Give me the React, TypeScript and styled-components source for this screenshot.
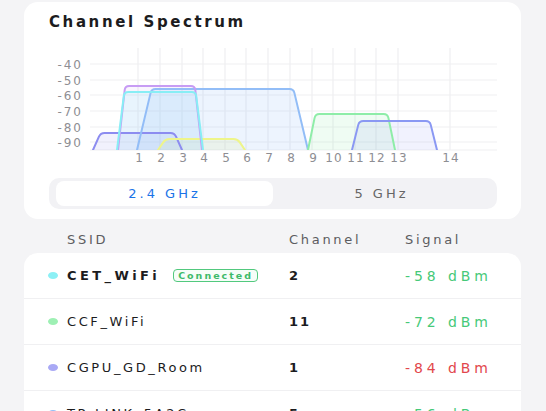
import React from "react";
import styled, { createGlobalStyle } from "styled-components";

const GlobalStyle = createGlobalStyle`
  html, body { margin: 0; padding: 0; }
  body {
    background: #f4f4f6;
    font-family: "DejaVu Sans", "Liberation Sans", sans-serif;
    color: #1c1c1e;
    overflow: hidden;
  }
`;

const Page = styled.div`
  padding: 2px 25px 0 24px;
`;

const SpectrumCard = styled.section`
  background: #ffffff;
  border-radius: 14px;
  padding: 10px 24px 10px 25px;
`;

const Title = styled.h2`
  margin: 0;
  font-size: 15px;
  line-height: 20px;
  font-weight: 700;
  letter-spacing: 2.6px;
  color: #1c1c1e;
`;

const ChartSvg = styled.svg`
  display: block;
  margin-top: 12px;
  width: 448px;
  height: 122px;
  font-family: "DejaVu Sans", sans-serif;
`;

const Tabs = styled.div`
  margin-top: 12px;
  height: 31px;
  box-sizing: border-box;
  background: #f2f2f5;
  border-radius: 10px;
  padding: 3px 7px;
  display: grid;
  grid-template-columns: 1fr 1fr;
`;

const Tab = styled.div<{ $active?: boolean }>`
  display: flex;
  align-items: center;
  justify-content: center;
  border-radius: 8px;
  font-size: 13px;
  letter-spacing: 3px;
  background: ${(p) => (p.$active ? "#ffffff" : "transparent")};
  color: ${(p) => (p.$active ? "#1a73e8" : "#666666")};
`;

const Grid = styled.div`
  display: grid;
  grid-template-columns: 241px 116px 1fr;
  align-items: center;
  padding-left: 24px;
`;

const HeaderRow = styled(Grid)`
  height: 34px;
  box-sizing: border-box;
  padding-top: 13px;
  align-items: start;
  font-size: 13px;
  line-height: 15px;
  letter-spacing: 2.7px;
  color: #5c5c60;
`;

const HeaderSsid = styled.span`
  padding-left: 19px;
`;

const ListCard = styled.div`
  background: #ffffff;
  border-radius: 14px 14px 0 0;
`;

const Row = styled(Grid)`
  height: 46px;
  box-sizing: border-box;
  border-bottom: 1px solid #f0f0f2;
`;

const SsidCell = styled.div`
  display: flex;
  align-items: center;
`;

const Dot = styled.span<{ $color: string }>`
  width: 10px;
  height: 7px;
  border-radius: 50%;
  background: ${(p) => p.$color};
  margin-right: 9px;
  flex: none;
`;

const SsidName = styled.span<{ $bold?: boolean }>`
  font-size: 13px;
  letter-spacing: ${(p) => (p.$bold ? "3.4px" : "2.6px")};
  font-weight: ${(p) => (p.$bold ? 700 : 400)};
  color: #1c1c1e;
`;

const Badge = styled.span`
  margin-left: 13px;
  height: 13px;
  box-sizing: border-box;
  border: 1.5px solid #52c97e;
  border-radius: 4px;
  padding: 0 4px;
  display: inline-flex;
  align-items: center;
  font-size: 9.5px;
  font-weight: 700;
  letter-spacing: 2px;
  color: #3dba6a;
  background: #f6fdf8;
`;

const ChannelCell = styled.span`
  font-size: 13px;
  font-weight: 600;
  letter-spacing: 2px;
  color: #1c1c1e;
`;

const SignalCell = styled.span<{ $weak?: boolean }>`
  font-size: 14px;
  letter-spacing: 3.9px;
  color: ${(p) => (p.$weak ? "#e2474c" : "#46c978")};
`;

const BOTTOM = 150;
const X_LEFT = 90;
const X_RIGHT = 497;
const TOP = 48;

const yTicks = [
  { label: "-40", y: 64 },
  { label: "-50", y: 80 },
  { label: "-60", y: 95 },
  { label: "-70", y: 111 },
  { label: "-80", y: 127 },
  { label: "-90", y: 142 },
];

const xTicks = [
  { label: "1", x: 138 },
  { label: "2", x: 160 },
  { label: "3", x: 182 },
  { label: "4", x: 203 },
  { label: "5", x: 225 },
  { label: "6", x: 246 },
  { label: "7", x: 268 },
  { label: "8", x: 290 },
  { label: "9", x: 312 },
  { label: "10", x: 333 },
  { label: "11", x: 355 },
  { label: "12", x: 376 },
  { label: "13", x: 398 },
  { label: "14", x: 450 },
];

type Wave = { l: number; r: number; top: number; stroke: string; fill: string };

const waves: Wave[] = [
  { l: 93, r: 182, top: 133, stroke: "#8c8cf0", fill: "rgba(140,140,240,0.12)" },
  { l: 158, r: 245, top: 139, stroke: "#eef58a", fill: "rgba(238,245,138,0.18)" },
  { l: 137, r: 308, top: 89, stroke: "#92bdf7", fill: "rgba(146,189,247,0.16)" },
  { l: 118, r: 202, top: 86, stroke: "#c79cf4", fill: "rgba(199,156,244,0.1)" },
  { l: 117, r: 203, top: 92, stroke: "#88eef5", fill: "rgba(136,238,245,0.14)" },
  { l: 308, r: 395, top: 114, stroke: "#8eeda8", fill: "rgba(142,237,168,0.14)" },
  { l: 352, r: 437, top: 121, stroke: "#8a98f3", fill: "rgba(138,152,243,0.12)" },
];

function wavePath(w: Wave, close: boolean) {
  const ramp = (w.r - w.l) * 0.085;
  const c = 4;
  const h = BOTTOM - w.top;
  const len = Math.sqrt(ramp * ramp + h * h);
  const ux = ramp / len;
  const uy = h / len;
  const p1x = w.l + ramp;
  const p2x = w.r - ramp;
  const f = (n: number) => n.toFixed(2);
  let d = `M ${f(w.l)} ${BOTTOM + 2} L ${f(w.l)} ${BOTTOM}`;
  d += ` L ${f(p1x - ux * c)} ${f(w.top + uy * c)}`;
  d += ` Q ${f(p1x)} ${f(w.top)} ${f(p1x + c)} ${f(w.top)}`;
  d += ` L ${f(p2x - c)} ${f(w.top)}`;
  d += ` Q ${f(p2x)} ${f(w.top)} ${f(p2x + ux * c)} ${f(w.top + uy * c)}`;
  d += ` L ${f(w.r)} ${BOTTOM} L ${f(w.r)} ${BOTTOM + 2}`;
  if (close) d += " Z";
  return d;
}

const Chart = () => (
  <ChartSvg viewBox="49 44 448 122">
    <defs>
      <clipPath id="plot">
        <rect x={X_LEFT} y={TOP} width={X_RIGHT - X_LEFT} height={BOTTOM - TOP} />
      </clipPath>
    </defs>
    {yTicks.map((t) => (
      <line key={t.label} x1={X_LEFT} x2={X_RIGHT} y1={t.y} y2={t.y} stroke="#efeff1" strokeWidth={1.2} />
    ))}
    <line x1={X_LEFT} x2={X_RIGHT} y1={BOTTOM} y2={BOTTOM} stroke="#efeff1" strokeWidth={1.2} />
    {xTicks.map((t) => (
      <line key={t.label} x1={t.x} x2={t.x} y1={TOP} y2={BOTTOM} stroke="#efeff1" strokeWidth={1.2} />
    ))}
    <g clipPath="url(#plot)">
      {waves.map((w, i) => (
        <path key={`f${i}`} d={wavePath(w, true)} fill={w.fill} stroke="none" />
      ))}
      {waves.map((w, i) => (
        <path
          key={`s${i}`}
          d={wavePath(w, false)}
          fill="none"
          stroke={w.stroke}
          strokeWidth={2}
          strokeLinejoin="round"
        />
      ))}
    </g>
    {yTicks.map((t) => (
      <text
        key={t.label}
        x={83}
        y={t.y + 4.5}
        textAnchor="end"
        fontSize={12}
        letterSpacing={2}
        fill="#8e8e93"
      >
        {t.label}
      </text>
    ))}
    {xTicks.map((t) => (
      <text
        key={t.label}
        x={t.x + 1}
        y={162}
        textAnchor="middle"
        fontSize={12}
        letterSpacing={t.label.length > 1 ? 1 : 0}
        fill="#8e8e93"
      >
        {t.label}
      </text>
    ))}
  </ChartSvg>
);

type Net = { ssid: string; color: string; channel: number; signal: number; connected?: boolean };

const nets: Net[] = [
  { ssid: "CET_WiFi", color: "#8cf0f5", channel: 2, signal: -58, connected: true },
  { ssid: "CCF_WiFi", color: "#9ef0b4", channel: 11, signal: -72 },
  { ssid: "CGPU_GD_Room", color: "#a9a9f5", channel: 1, signal: -84 },
  { ssid: "TP-LINK_5A2C", color: "#92bdf7", channel: 5, signal: -56 },
];

export default function App() {
  return (
    <>
      <GlobalStyle />
      <Page>
        <SpectrumCard>
          <Title>Channel Spectrum</Title>
          <Chart />
          <Tabs>
            <Tab $active>2.4 GHz</Tab>
            <Tab>5 GHz</Tab>
          </Tabs>
        </SpectrumCard>
        <HeaderRow>
          <HeaderSsid>SSID</HeaderSsid>
          <span>Channel</span>
          <span>Signal</span>
        </HeaderRow>
        <ListCard>
          {nets.map((n) => (
            <Row key={n.ssid}>
              <SsidCell>
                <Dot $color={n.color} />
                <SsidName $bold={n.connected}>{n.ssid}</SsidName>
                {n.connected && <Badge>Connected</Badge>}
              </SsidCell>
              <ChannelCell>{n.channel}</ChannelCell>
              <SignalCell $weak={n.signal <= -80}>{n.signal} dBm</SignalCell>
            </Row>
          ))}
        </ListCard>
      </Page>
    </>
  );
}
